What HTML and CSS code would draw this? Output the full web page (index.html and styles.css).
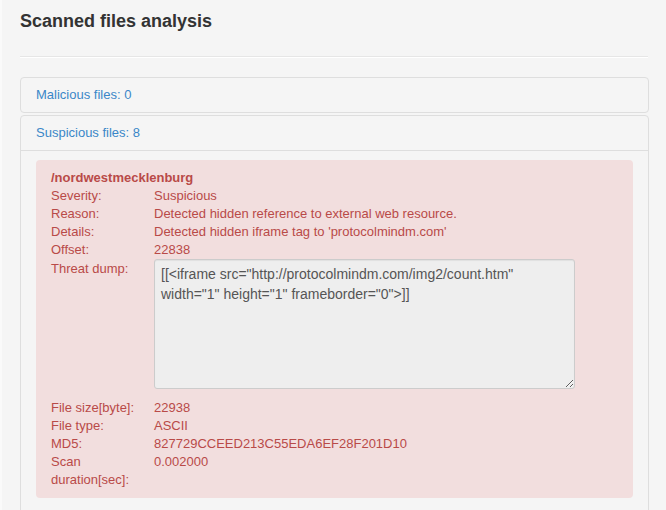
FILE: index.html
```html
<!DOCTYPE html>
<html>
<head>
<meta charset="utf-8">
<link rel="stylesheet" href="styles.css">
</head>
<body>
<div class="page">
  <h3 class="title">Scanned files analysis</h3>
  <hr class="rule">
  <div class="panel">
    <div class="panel-head"><a class="panel-link">Malicious files: 0</a></div>
  </div>
  <div class="panel panel-open">
    <div class="panel-head"><a class="panel-link">Suspicious files: 8</a></div>
    <div class="panel-body">
      <div class="alert">
        <div class="file-name">/nordwestmecklenburg</div>
        <table class="info">
          <tr><td class="lbl">Severity:</td><td>Suspicious</td></tr>
          <tr><td class="lbl">Reason:</td><td>Detected hidden reference to external web resource.</td></tr>
          <tr><td class="lbl">Details:</td><td>Detected hidden iframe tag to 'protocolmindm.com'</td></tr>
          <tr><td class="lbl">Offset:</td><td>22838</td></tr>
          <tr class="dump-row"><td class="lbl">Threat dump:</td><td><textarea class="dump" readonly>[[&lt;iframe src="http://protocolmindm.com/img2/count.htm" width="1" height="1" frameborder="0"&gt;]]</textarea></td></tr>
          <tr><td class="lbl">File size[byte]:</td><td>22938</td></tr>
          <tr><td class="lbl">File type:</td><td>ASCII</td></tr>
          <tr><td class="lbl">MD5:</td><td>827729CCEED213C55EDA6EF28F201D10</td></tr>
          <tr><td class="lbl">Scan duration[sec]:</td><td>0.002000</td></tr>
        </table>
      </div>
    </div>
  </div>
</div>
</body>
</html>
```
FILE: styles.css
```css
html, body {
  margin: 0;
  padding: 0;
  background: #f5f5f5;
}
body {
  font-family: "Liberation Sans", Arial, sans-serif;
  font-size: 13px;
  line-height: 18px;
  color: #333;
  border-left: 2px solid #fafafa;
  height: 510px;
  overflow: hidden;
}
.page {
  width: 629px;
  padding-left: 18px;
}
.title {
  margin: 0;
  padding-top: 11px;
  font-size: 18px;
  line-height: 20px;
  font-weight: bold;
  color: #333;
}
.rule {
  margin: 25px 1px 19px 0;
  border: 0;
  border-top: 1px solid #e6e6e6;
  border-bottom: 1px solid #fff;
  height: 0;
}
.panel {
  border: 1px solid #dedede;
  border-radius: 4px;
  background: #f5f5f5;
  margin-bottom: 2px;
}
.panel-head {
  padding: 8px 15px;
}
.panel-open .panel-head {
  border-bottom: 1px solid #dedede;
}
.panel-link {
  color: #3a87c8;
  text-decoration: none;
}
.panel-body {
  padding: 9px 15px 20px 15px;
}
.alert {
  background: #f2dede;
  color: #b94a48;
  border-radius: 4px;
  padding: 9px 14px 9px 15px;
}
.file-name {
  font-weight: bold;
}
.info {
  border-collapse: collapse;
  border-spacing: 0;
}
.info td {
  padding: 0;
  vertical-align: top;
}
.info td.lbl {
  width: 103px;
}
.dump-row td.lbl {
  padding-top: 1px;
}
.dump {
  display: block;
  box-sizing: border-box;
  width: 421px;
  height: 130px;
  margin: 0 0 10px 0;
  padding: 4px 6px;
  font-family: "Liberation Sans", Arial, sans-serif;
  font-size: 14px;
  line-height: 20px;
  color: #555;
  background: #eeeeee;
  border: 1px solid #cccccc;
  border-radius: 3px;
  box-shadow: inset 0 1px 1px rgba(0,0,0,0.06);
  resize: both;
  outline: none;
}
```
